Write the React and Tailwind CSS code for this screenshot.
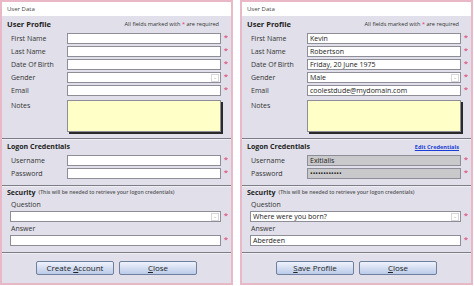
import React from 'react';

const font = { fontFamily: '"Open Sans", "Liberation Sans", sans-serif' };

const Star = () => <span className="w-[10px] text-center text-[8px] leading-none text-[#e0306a]">*</span>;

const Field = ({ label, value, gray, select }) => (
    <div className="flex h-[13px] items-start">
        <span className="w-[65px] pl-[9px] text-[7px] leading-[11px] text-[#333]">{label}</span>
        <div className={`flex h-[11px] w-[154px] items-center border border-[#8d8e98] ${gray ? 'bg-[#c9c9cb]' : 'bg-white'}`}>
            <span className="flex-1 pl-[2px] text-[7px] leading-none text-[#222]">{value}</span>
            {select && (
                <span className="mr-[1px] flex h-[8px] w-[8px] items-center justify-center border border-[#d6d6dc] text-[5px] leading-none text-[#aaa]">⌄</span>
            )}
        </div>
        <Star />
    </div>
);

const Separator = () => <div className="h-[2px] border-t border-[#7d7d86] bg-[#eeeef4]" />;

const Panel = ({ data }) => (
    <div className="flex h-[285px] w-[233px] flex-col border-2 border-[#e8b8c6] bg-[#e1e0ea]" style={font}>
        <div className="flex h-[14px] items-center bg-white pl-[5px] text-[6px] text-[#444]">User Data</div>
        <div className="flex h-[17px] items-center justify-between pl-[5px] pr-[12px]">
            <span className="text-[7.5px] font-bold text-[#222]">User Profile</span>
            <span className="text-[5.6px] text-[#333]">
                All fields marked with <span className="text-[#e0306a]">*</span> are required
            </span>
        </div>
        <Field label="First Name" value={data.first} />
        <Field label="Last Name" value={data.last} />
        <Field label="Date Of Birth" value={data.dob} />
        <Field label="Gender" value={data.gender} select />
        <Field label="Email" value={data.email} />
        <div className="flex h-[40px] items-start pt-[2px]">
            <span className="w-[65px] pl-[9px] text-[7px] leading-[11px] text-[#333]">Notes</span>
            <div className="h-[32px] w-[154px] border border-[#8d8e98] bg-[#ffffc8] shadow-[2px_2px_0_#2a2a2a]" />
        </div>
        <Separator />
        <div className="flex h-[15px] items-center justify-between pl-[5px] pr-[12px]">
            <span className="text-[7px] font-bold text-[#222]">Logon Credentials</span>
            {data.edit && <span className="text-[5.6px] font-bold text-[#1b3fd6] underline">Edit Credentials</span>}
        </div>
        <Field label="Username" value={data.user} gray={data.edit} />
        <Field label="Password" value={data.pass} gray={data.edit} />
        <div className="h-[4px]" />
        <Separator />
        <div className="flex h-[12px] items-center pl-[5px]">
            <span className="text-[7px] font-bold text-[#222]">Security</span>
            <span className="ml-[3px] text-[5.2px] font-semibold text-[#555]">(This will be needed to retrieve your logon credentials)</span>
        </div>
        <div className="h-[12px] pl-[9px] text-[7px] leading-[12px] text-[#333]">Question</div>
        <div className="flex h-[12px] items-start pl-[8px]">
            <div className="flex h-[11px] w-[212px] items-center border border-[#8d8e98] bg-white">
                <span className="flex-1 pl-[2px] text-[7px] leading-none text-[#222]">{data.question}</span>
                <span className="mr-[1px] flex h-[8px] w-[8px] items-center justify-center border border-[#d6d6dc] text-[5px] leading-none text-[#aaa]">⌄</span>
            </div>
            <Star />
        </div>
        <div className="h-[12px] pl-[9px] text-[7px] leading-[12px] text-[#333]">Answer</div>
        <div className="flex h-[12px] items-start pl-[8px]">
            <div className="flex h-[11px] w-[212px] items-center border border-[#8d8e98] bg-white">
                <span className="flex-1 pl-[2px] text-[7px] leading-none text-[#222]">{data.answer}</span>
            </div>
            <Star />
        </div>
        <div className="h-[5px]" />
        <Separator />
        <div className="flex justify-center gap-[5px] pt-[7px]">
            <button className="flex h-[14px] w-[78px] items-center justify-center rounded-[2px] border border-[#6f7f9f] bg-gradient-to-b from-[#eef2fb] to-[#bccbe8] text-[8px] text-[#222]">
                {data.primary}
            </button>
            <button className="flex h-[14px] w-[78px] items-center justify-center rounded-[2px] border border-[#6f7f9f] bg-gradient-to-b from-[#eef2fb] to-[#bccbe8] text-[8px] text-[#222]">
                <span><span className="underline">C</span>lose</span>
            </button>
        </div>
    </div>
);

const App = () => {
    const empty = {
        first: '', last: '', dob: '', gender: '', email: '', user: '', pass: '', question: '', answer: '', edit: false,
        primary: <span>Create <span className="underline">A</span>ccount</span>,
    };
    const filled = {
        first: 'Kevin',
        last: 'Robertson',
        dob: 'Friday, 20 June 1975',
        gender: 'Male',
        email: 'coolestdude@mydomain.com',
        user: 'Exitialis',
        pass: '••••••••••••',
        question: 'Where were you born?',
        answer: 'Aberdeen',
        edit: true,
        primary: <span><span className="underline">S</span>ave Profile</span>,
    };

    return (
        <div className="flex h-[286px] w-[474px] gap-[7px] bg-white">
            <Panel data={empty} />
            <Panel data={filled} />
        </div>
    );
};

export default App;
